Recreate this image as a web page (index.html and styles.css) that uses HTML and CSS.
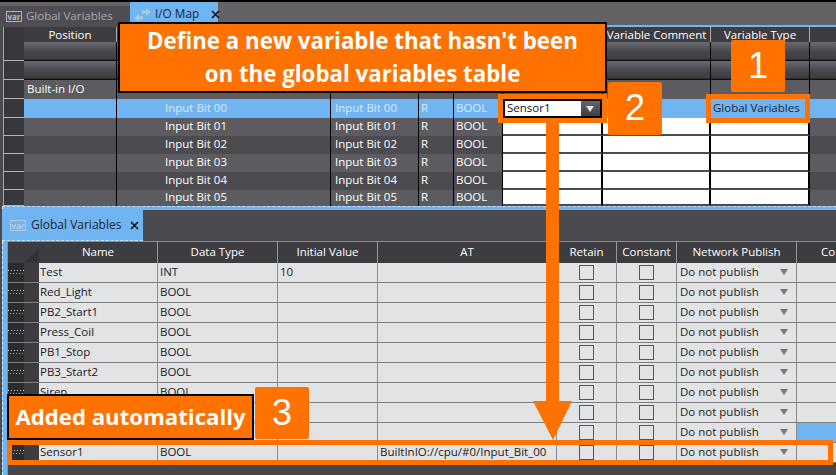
FILE: index.html
```html
<!DOCTYPE html>
<html lang="en">
<head>
<meta charset="utf-8">
<title>I/O Map and Global Variables</title>
<link rel="stylesheet" href="styles.css">
</head>
<body>
<div class="topline"></div>
<div class="tabbar">
  <div class="tab tab-off"><span class="varicon">var</span><span class="tabtext">Global Variables</span></div>
  <div class="tab tab-on">
    <svg class="swap" width="17" height="14" viewBox="0 0 17 14"><path d="M8 2.500h4V0l5 4-5 4V5.500H8zM9 8.500H5V6l-5 4 5 4v-2.500h4z" fill="#a9c9e8"/></svg>
    <span class="tabtext">I/O Map</span>
    <svg class="close" width="9" height="9" viewBox="0 0 9 9"><path d="M1 1l7 7M8 1L1 8" stroke="#111" stroke-width="1.600"/></svg>
  </div>
  <div class="tabrest"></div>
</div>
<section class="io">
  <div class="iorow iohead"><i></i><b>Position</b><b></b><b></b><b></b><b></b><b></b><b>Variable Comment</b><b>Variable Type</b><b></b></div>
  <div class="iorow group"><i></i><s></s><s></s><s></s><s></s><s></s><s></s><s></s><s></s><s></s></div>
  <div class="iorow group"><i></i><s></s><s></s><s></s><s></s><s></s><s></s><s></s><s></s><s></s></div>
  <div class="iorow plain tall"><i></i><span>Built-in I/O</span><span></span><span></span><span></span><span></span><span></span><span></span><span></span><span></span></div>
  <div class="iorow sel tall"><i></i><span></span><span class="ind">Input Bit 00</span><span>Input Bit 00</span><span class="tight">R</span><span class="tight">BOOL</span><span></span><span></span><span class="dark">Global Variables</span><span></span></div>
  <div class="iorow data"><i></i><span></span><span class="ind">Input Bit 01</span><span>Input Bit 01</span><span class="tight">R</span><span class="tight">BOOL</span><u></u><u></u><u></u><span></span></div>
  <div class="iorow data alt"><i></i><span></span><span class="ind">Input Bit 02</span><span>Input Bit 02</span><span class="tight">R</span><span class="tight">BOOL</span><u></u><u></u><u></u><span></span></div>
  <div class="iorow data"><i></i><span></span><span class="ind">Input Bit 03</span><span>Input Bit 03</span><span class="tight">R</span><span class="tight">BOOL</span><u></u><u></u><u></u><span></span></div>
  <div class="iorow data alt"><i></i><span></span><span class="ind">Input Bit 04</span><span>Input Bit 04</span><span class="tight">R</span><span class="tight">BOOL</span><u></u><u></u><u></u><span></span></div>
  <div class="iorow data last"><i></i><span></span><span class="ind">Input Bit 05</span><span>Input Bit 05</span><span class="tight">R</span><span class="tight">BOOL</span><u></u><u></u><u></u><span></span></div>
</section>
<section class="gv">
  <div class="gvtab"><span class="varicon pale">var</span><span class="tabtext">Global Variables</span>
    <svg class="close" width="9" height="9" viewBox="0 0 9 9"><path d="M1 1l7 7M8 1L1 8" stroke="#111" stroke-width="1.600"/></svg>
  </div>
  <div class="gvtable">
    <div class="gvrow gvhead"><i class="corner"></i><b>Name</b><b>Data Type</b><b>Initial Value</b><b>AT</b><b>Retain</b><b>Constant</b><b>Network Publish</b><b class="cut">Co</b></div>
    <div class="gvrow"><i class="handle"></i><span>Test</span><span>INT</span><span>10</span><span></span><em></em><em></em><span class="pub">Do not publish</span><span></span></div>
    <div class="gvrow"><i class="handle"></i><span>Red_Light</span><span>BOOL</span><span></span><span></span><em></em><em></em><span class="pub">Do not publish</span><span></span></div>
    <div class="gvrow"><i class="handle"></i><span>PB2_Start1</span><span>BOOL</span><span></span><span></span><em></em><em></em><span class="pub">Do not publish</span><span></span></div>
    <div class="gvrow"><i class="handle"></i><span>Press_Coil</span><span>BOOL</span><span></span><span></span><em></em><em></em><span class="pub">Do not publish</span><span></span></div>
    <div class="gvrow"><i class="handle"></i><span>PB1_Stop</span><span>BOOL</span><span></span><span></span><em></em><em></em><span class="pub">Do not publish</span><span></span></div>
    <div class="gvrow"><i class="handle"></i><span>PB3_Start2</span><span>BOOL</span><span></span><span></span><em></em><em></em><span class="pub">Do not publish</span><span></span></div>
    <div class="gvrow"><i class="handle"></i><span>Siren</span><span>BOOL</span><span></span><span></span><em></em><em></em><span class="pub">Do not publish</span><span></span></div>
    <div class="gvrow"><i class="handle"></i><span></span><span></span><span></span><span></span><em></em><em></em><span class="pub">Do not publish</span><span></span></div>
    <div class="gvrow"><i class="handle"></i><span></span><span></span><span></span><span></span><em></em><em></em><span class="pub">Do not publish</span><span class="bluecell"></span></div>
    <div class="gvrow"><i class="handle"></i><span>Sensor1</span><span>BOOL</span><span></span><span class="at">BuiltInIO://cpu/#0/Input_Bit_00</span><em></em><em></em><span class="pub">Do not publish</span><span></span></div>
  </div>
</section>

<div class="note big">Define a new variable that hasn't been<br>on the global variables table</div>
<div class="num n1">1</div>
<div class="num n2">2</div>
<div class="num n3">3</div>
<div class="frame f-sensor"><div class="combo"><span>Sensor1</span><div class="combobtn"></div></div></div>
<div class="frame f-type"></div>
<div class="frame f-row"></div>
<div class="stem"></div>
<div class="head"></div>
<div class="note small">Added automatically</div>
</body>
</html>
```
FILE: styles.css
```css
* { box-sizing: border-box; }
html, body { margin: 0; padding: 0; }
body {
  width: 836px;
  height: 475px;
  overflow: hidden;
  position: relative;
  background: #4b4b4f;
  font: 11.5px/1 "Open Sans", "Noto Sans", sans-serif;
  color: #fff;
}
i, em, s, u, b { font-style: normal; text-decoration: none; font-weight: 400; display: block; }

.topline { height: 2px; background: #000; }

.tabbar { display: flex; height: 25px; background: #636365; }
.tab { display: flex; align-items: center; flex: none; }
.tabtext { white-space: nowrap; padding-bottom: 1px; }
.tab-off { width: 130px; margin-top: 4px; padding-left: 6px; gap: 4px; background: #4e4e52; color: #a8a8ac; font-size: 11.5px; }
.tab-on { width: 88px; padding-left: 4px; background: #70b5f1; color: #1c2530; gap: 4px; font-size: 11.800px; }
.tab-on .close { margin-left: 8px; flex: none; }
.swap { flex: none; }
.tabrest { flex: 1; border-bottom: 2px solid #70b5f1; }
.varicon {
  flex: none;
  width: 16px; height: 11px; border: 1px solid #b0b0b4;
  font-size: 8px; font-weight: 700; line-height: 9px; text-align: center; color: #b8b8bc;
}
.varicon.pale { border-color: #b4cde4; color: #b4cde4; }

.io { height: 179px; margin-left: 3px; border-left: 1px solid #70b5f1; background: #5c5c60; }
.iorow {
  display: grid;
  grid-template-columns: 20px 93px 214px 88px 35px 49px 100px 108px 99px 26px;
  height: 18px;
  align-items: stretch;
}
.iorow > i { background: #38383c; border-bottom: 1px solid #b5b5b5; }
.iorow > span { display: flex; align-items: center; padding: 0 0 2px 4px; border-right: 1px solid #000; white-space: nowrap; }
.iorow > span:first-of-type { padding-left: 3px; }
.iorow > span:last-child { border-right: 0; }
.iorow .ind { padding-left: 48px; }
.iorow .tight { padding-left: 2px; }

.iohead { height: 15px; background: #3d3d41; }
.iohead > i { background: #38383c; border-bottom: 0; }
.iohead > b { display: flex; align-items: center; justify-content: center; border-right: 1px solid #aaa; white-space: nowrap; }
.iohead > b:last-child { border-right: 0; }

.group { height: 19px; }
.group > s { background: linear-gradient(#6a6a70, #4a4a50 45%, #3c3c40 90%, #000); border-right: 1px solid #000; }
.group > s:last-child { border-right: 0; }

.plain { background: #5c5c60; }
.tall { height: 19px; }
.sel { background: #70b5f1; color: #dbeafa; }
.iorow .dark { color: #1c2530; padding-left: 2px; }
.data { background: #5c5c60; }
.data.alt { background: #4c4c50; }
.data.last { height: 16px; }
.iorow > u { display: block; background: #fff; border-right: 2px solid #000; border-bottom: 2px solid #4c4c50; }

.gv {
  height: 269px;
  margin-left: 2px;
  padding: 3px 0 0 4px;
  border-top: 1px dashed #b9dcf8;
  border-left: 1px dashed #d7e9f8;
  background: #70b5f1;
  display: flex;
  flex-direction: column;
  position: relative;
}
.gvtab {
  width: 141px; height: 31px; margin-left: -5px; padding-left: 8px;
  display: flex; align-items: center; gap: 5px; flex: none;
  font-size: 12px; color: #1c2530; background: #70b5f1;
  border-bottom: 1px dashed #d7e9f8;
  position: relative;
}
.gvtab .close { margin-left: 4px; flex: none; }
.gvtable { flex: 1; background: #47474b; border-top: 1px solid #8f8f8f; border-left: 1px solid #8f8f8f; }
.gv::before { content: ""; position: absolute; left: 140px; right: 0; top: 3px; height: 31px; background: #4b4b4f; }

.gvrow {
  display: grid;
  grid-template-columns: 31px 119px 120px 100px 179px 60px 60px 120px 39px;
  height: 20px;
  background: #e2e3e5;
  color: #1b1b1b;
  border-bottom: 1px solid #7f7f7f;
}
.gvrow > span { display: flex; align-items: center; padding: 0 0 2px 2px; border-right: 1px solid #8a8a8a; white-space: nowrap; }
.gvrow > span:first-of-type { padding-left: 1px; }
.gvrow > span:last-child { border-right: 0; }
.gvhead { height: 21px; background: #3d3d41; color: #fff; border-bottom: 0; }
.gvhead > b { display: flex; align-items: center; justify-content: center; padding-bottom: 1px; border-right: 1px solid #999; white-space: nowrap; }
.gvhead > b:last-child { border-right: 0; justify-content: flex-start; padding-left: 24px; }
.corner { background: linear-gradient(135deg, #3d3d41 70%, #333336 70%); }
.handle {
  background:
    radial-gradient(circle, #c8c8c8 0.7px, transparent 0.9px) 2px 6px / 3px 3px repeat-x,
    radial-gradient(circle, #a8a8a8 0.7px, transparent 0.9px) 1px 9px / 3px 3px repeat-x,
    linear-gradient(90deg, #2c2c2e 16px, #3d3d41 16px);
  background-clip: content-box, content-box, border-box;
  padding-right: 15px;
}
.gvrow > em { display: flex; align-items: center; justify-content: center; border-right: 1px solid #8a8a8a; }
.gvrow > em::after { content: ""; width: 13px; height: 13px; border: 1px solid #555; }
.gvrow > .pub { position: relative; padding-left: 3px; color: #222; }
.pub::after {
  content: ""; position: absolute; right: 8px; top: 6px;
  border-left: 4px solid transparent; border-right: 4px solid transparent; border-top: 6px solid #77777b;
}
.bluecell { background: #70b5f1; }

/* annotations laid over the screenshot */
.note {
  position: absolute; background: #ff7200; border: 2px solid #000; color: #fff; font-weight: 700; text-align: center;
}
.big { left: 118px; top: 22px; width: 489px; height: 71px; font-size: 22.300px; line-height: 33px; }
.small { left: 7px; top: 394px; width: 247px; height: 46px; font-size: 22.200px; line-height: 42px; }
.num {
  position: absolute; width: 54px; height: 52px; background: #ff7200; border-radius: 2px;
  font-size: 36px; line-height: 52px; text-align: center; font-family: "Liberation Sans", sans-serif;
}
.n1 { left: 731px; top: 40px; }
.n2 { left: 608px; top: 82px; height: 53px; }
.n3 { left: 255px; top: 387px; }
.frame { position: absolute; border: 5px solid #ff7200; }
.f-sensor { left: 498px; top: 94px; width: 109px; height: 29px; }
.f-type { left: 706px; top: 94px; width: 104px; height: 29px; }
.f-row { left: 7px; top: 440px; width: 826px; height: 25px; }
.combo { display: flex; height: 19px; border: 2px solid #000; background: #fff; color: #111; align-items: center; padding-left: 2px; }
.combo span { flex: 1; padding-bottom: 1px; }
.combobtn { width: 19px; height: 15px; background: linear-gradient(#66666a, #3f3f43); position: relative; }
.combobtn::after {
  content: ""; position: absolute; left: 5px; top: 5px;
  border-left: 4px solid transparent; border-right: 4px solid transparent; border-top: 6px solid #e4e4e4;
}
.stem { position: absolute; left: 546px; top: 123px; width: 13px; height: 279px; background: #ff7200; }
.head {
  position: absolute; left: 533px; top: 401px; width: 0; height: 0;
  border-left: 20px solid transparent; border-right: 19px solid transparent; border-top: 39px solid #ff7200;
}
```
